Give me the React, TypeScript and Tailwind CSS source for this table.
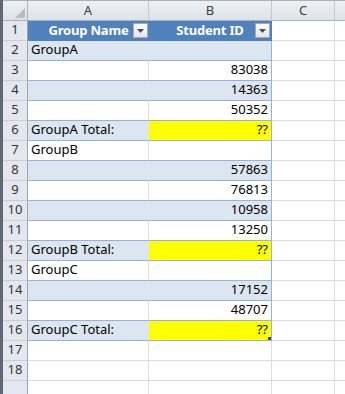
import React from "react";

type Row = { a: string; b: string; total?: boolean };

const rows: Row[] = [
  { a: "GroupA", b: "" },
  { a: "", b: "83038" },
  { a: "", b: "14363" },
  { a: "", b: "50352" },
  { a: "GroupA Total:", b: "??", total: true },
  { a: "GroupB", b: "" },
  { a: "", b: "57863" },
  { a: "", b: "76813" },
  { a: "", b: "10958" },
  { a: "", b: "13250" },
  { a: "GroupB Total:", b: "??", total: true },
  { a: "GroupC", b: "" },
  { a: "", b: "17152" },
  { a: "", b: "48707" },
  { a: "GroupC Total:", b: "??", total: true },
];

const FilterButton = () => (
  <div className="absolute right-[1px] top-[2px] w-[15px] h-[15px] border border-[#a7abb0] bg-gradient-to-b from-white to-[#e3e6ea] flex items-center justify-center">
    <svg width="7" height="4" viewBox="0 0 7 4">
      <path d="M0 0 H7 L3.5 4 Z" fill="#4a4f57" />
    </svg>
  </div>
);

const RowHeader = ({ n }: { n?: number }) => (
  <div className="w-[25px] shrink-0 h-full bg-[#e4e8ee] border-r border-b border-r-[#9aa4b1] border-b-[#c9ced6] flex items-end justify-center pb-[1px] text-[#333]">
    {n}
  </div>
);

export default function App() {
  return (
    <div
      className="w-[345px] h-[394px] overflow-hidden bg-white flex text-[13px]"
      style={{ fontFamily: '"Noto Sans", "Open Sans", sans-serif' }}
    >
      <div className="w-[3px] shrink-0 bg-[#5f6975]" />
      <div className="flex-1 flex flex-col">
        {/* formula bar edge */}
        <div className="h-[3px] flex border-b border-[#a9b1bc] bg-[#f7f8f9]">
          <div className="w-[242px] border-r border-[#a9b1bc]" />
        </div>
        <div className="h-[4px] bg-[#e8ebef]" />
        {/* column headers */}
        <div className="h-[20px] flex bg-gradient-to-b from-[#eef1f4] to-[#dde2e8] text-[#404040]">
          <div className="w-[25px] shrink-0 border-r border-b border-[#a9b1bc] relative">
            <div className="absolute right-[2px] bottom-[2px] w-0 h-0 border-l-[10px] border-l-transparent border-b-[10px] border-b-[#b9bec6]" />
          </div>
          <div className="w-[121px] shrink-0 border-r border-b border-r-[#c3c9d1] border-b-[#a9b1bc] flex items-center justify-center">A</div>
          <div className="w-[123px] shrink-0 border-r border-b border-r-[#c3c9d1] border-b-[#a9b1bc] flex items-center justify-center">B</div>
          <div className="w-[63px] shrink-0 border-r border-b border-r-[#c3c9d1] border-b-[#a9b1bc] flex items-center justify-center">C</div>
          <div className="flex-1 border-b border-[#a9b1bc]" />
        </div>
        {/* row 1: table header */}
        <div className="h-[20px] flex">
          <RowHeader n={1} />
          <div className="w-[121px] shrink-0 bg-[#4f81bd] border-b border-[#4f81bd] flex items-center justify-center text-white font-bold tracking-[-0.2px] relative">
            Group Name
            <FilterButton />
          </div>
          <div className="w-[123px] shrink-0 bg-[#4f81bd] border-b border-r border-[#4f81bd] flex items-center justify-center text-white font-bold tracking-[-0.2px] relative">
            Student ID
            <FilterButton />
          </div>
          <div className="w-[63px] shrink-0 border-r border-b border-[#dadcdd]" />
          <div className="flex-1 border-b border-[#dadcdd]" />
        </div>
        {rows.map((r, i) => {
          const banded = i % 2 === 0;
          return (
            <div key={i} className="h-[20px] flex text-black">
              <RowHeader n={i + 2} />
              <div
                className={`w-[121px] shrink-0 border-b border-r border-b-[#95b3d7] px-[3px] flex items-end pb-[1px] ${
                  banded ? "bg-[#dce6f1] border-r-[#dce6f1]" : "bg-white border-r-[#dadcdd]"
                }`}
              >
                {r.a}
              </div>
              <div
                className={`w-[123px] shrink-0 border-b border-r border-b-[#95b3d7] border-r-[#95b3d7] px-[3px] flex items-end justify-end pb-[1px] relative ${
                  r.total ? "bg-[#ffff00]" : banded ? "bg-[#dce6f1]" : "bg-white"
                }`}
              >
                {r.b}
                {i === rows.length - 1 && (
                  <div className="absolute right-0 bottom-0 w-[3px] h-[3px] bg-[#30507a]" />
                )}
              </div>
              <div className="w-[63px] shrink-0 border-r border-b border-[#dadcdd]" />
              <div className="flex-1 border-b border-[#dadcdd]" />
            </div>
          );
        })}
        {[17, 18, 0].map((n) => (
          <div key={n} className="h-[20px] shrink-0 flex">
            <RowHeader n={n || undefined} />
            <div className="w-[121px] shrink-0 border-r border-b border-[#dadcdd]" />
            <div className="w-[123px] shrink-0 border-r border-b border-[#dadcdd]" />
            <div className="w-[63px] shrink-0 border-r border-b border-[#dadcdd]" />
            <div className="flex-1 border-b border-[#dadcdd]" />
          </div>
        ))}
      </div>
    </div>
  );
}
